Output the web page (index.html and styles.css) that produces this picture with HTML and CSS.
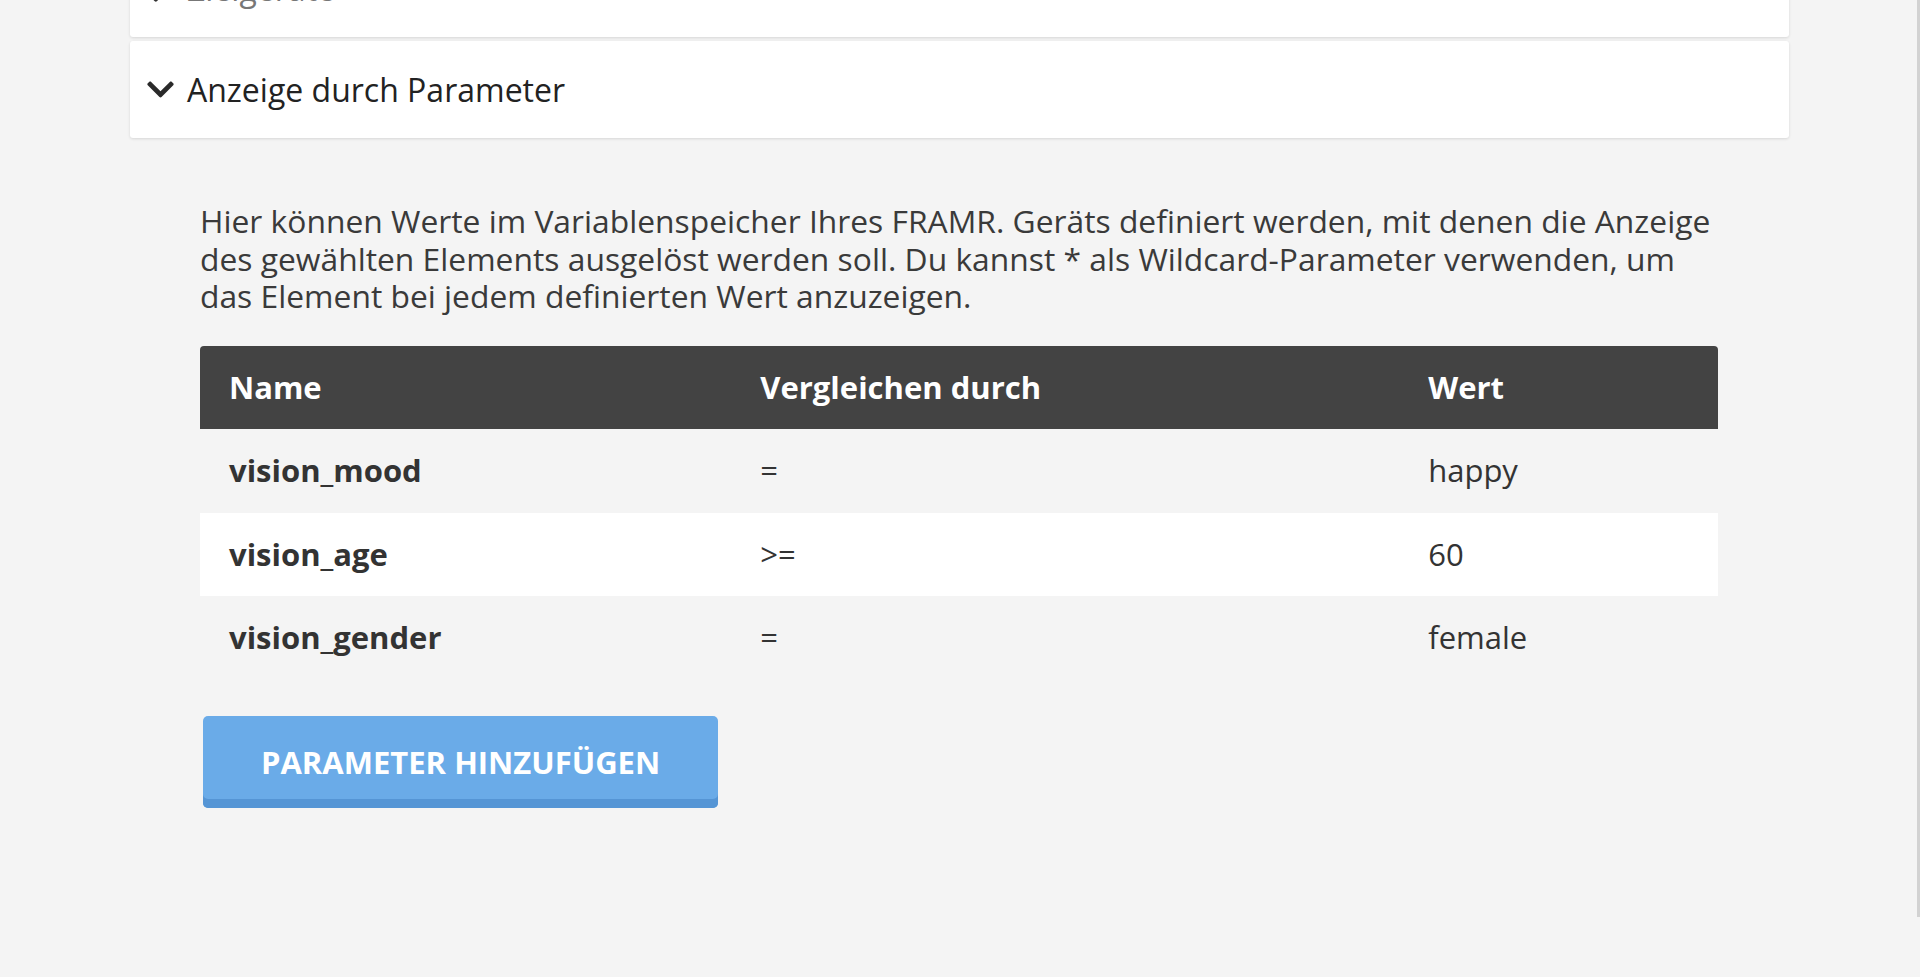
FILE: index.html
```html
<!DOCTYPE html>
<html lang="de">
<head>
    <meta charset="UTF-8">
    <meta name="viewport" content="width=device-width, initial-scale=1.0">
    <title>Anzeige durch Parameter</title>
    <link rel="stylesheet" href="styles.css">
</head>
<body>
    <div class="viewport">
        <div class="panels">
            <div class="panel panel-collapsed">
                <svg class="chevron" viewBox="0 0 320 512" aria-hidden="true">
                    <path d="M285.476 272.971L91.132 467.314c-9.373 9.373-24.569 9.373-33.941 0l-22.667-22.667c-9.357-9.357-9.375-24.522-.04-33.901L188.505 256 34.484 101.255c-9.335-9.379-9.317-24.544.04-33.901l22.667-22.667c9.373-9.373 24.569-9.373 33.941 0L285.475 239.03c9.373 9.372 9.373 24.568.001 33.941z"/>
                </svg>
                <span>Zielgeräte</span>
            </div>

            <div class="panel">
                <svg class="chevron" viewBox="0 0 448 512" aria-hidden="true">
                    <path d="M207.029 381.476L12.686 187.132c-9.373-9.373-9.373-24.569 0-33.941l22.667-22.667c9.357-9.357 24.522-9.375 33.901-.04L224 284.505l154.745-154.021c9.379-9.335 24.544-9.317 33.901.04l22.667 22.667c9.373 9.373 9.373 24.569 0 33.941L240.971 381.476c-9.373 9.372-24.569 9.372-33.942 0z"/>
                </svg>
                <span>Anzeige durch Parameter</span>
            </div>

            <div class="panel-body">
                <p class="hint">
                    Hier können Werte im Variablenspeicher Ihres FRAMR. Geräts definiert werden, mit denen die Anzeige
                    des gewählten Elements ausgelöst werden soll. Du kannst * als Wildcard-Parameter verwenden, um
                    das Element bei jedem definierten Wert anzuzeigen.
                </p>

                <table class="params">
                    <colgroup>
                        <col class="col-name">
                        <col class="col-op">
                        <col class="col-value">
                    </colgroup>
                    <thead>
                        <tr>
                            <th>Name</th>
                            <th>Vergleichen durch</th>
                            <th>Wert</th>
                        </tr>
                    </thead>
                    <tbody>
                        <tr>
                            <td class="param-name">vision_mood</td>
                            <td>=</td>
                            <td>happy</td>
                        </tr>
                        <tr>
                            <td class="param-name">vision_age</td>
                            <td>&gt;=</td>
                            <td>60</td>
                        </tr>
                        <tr>
                            <td class="param-name">vision_gender</td>
                            <td>=</td>
                            <td>female</td>
                        </tr>
                    </tbody>
                </table>

                <button class="btn-add">Parameter hinzufügen</button>
            </div>
        </div>
    </div>
</body>
</html>
```

FILE: styles.css
```css
/* Grundlayout */
body {
    margin: 0;
    background: #f4f4f4;
    font-family: "Open Sans", "Noto Sans", Arial, sans-serif;
    color: #333;
    overflow: hidden;
}

.viewport {
    min-height: 100vh;
    border-right: 3px solid #d2d2d2;
}

.panels {
    margin: -60px 128px 0 130px;
}

/* Akkordeon-Kopf */
.panel {
    display: flex;
    align-items: center;
    gap: 13px;
    height: 97px;
    box-sizing: border-box;
    padding: 0 17px;
    margin-bottom: 4px;
    background: #fff;
    border-radius: 3px;
    box-shadow: 0 1px 3px rgba(0, 0, 0, 0.12);
    font-size: 32px;
    color: #222;
}

.panel .chevron {
    width: 27px;
    height: 31px;
    fill: #2a2a2a;
    flex-shrink: 0;
}

.panel-collapsed {
    color: #777;
}

.panel-collapsed .chevron {
    width: 20px;
    fill: #333;
    margin: 0 3px 0 4px;
}

/* Inhalt */
.panel-body {
    padding: 0 71px 0 70px;
}

.hint {
    margin: 64px -8px 31px 0;
    font-size: 31.8px;
    line-height: 37.5px;
    color: #3a3a3a;
}

/* Tabelle */
.params {
    width: 100%;
    border-collapse: collapse;
    table-layout: fixed;
    font-size: 31px;
    line-height: 37.5px;
}

.col-name { width: 35%; }
.col-op { width: 44%; }
.col-value { width: 21%; }

.params th,
.params td {
    padding: 23px 29px;
    text-align: left;
}

.params thead tr {
    background: #434343;
}

.params th {
    color: #fff;
    font-weight: 700;
}

.params th:first-child { border-top-left-radius: 4px; }
.params th:last-child { border-top-right-radius: 4px; }

.params tbody tr:nth-child(even) {
    background: #fff;
}

.params td {
    color: #333;
}

.param-name {
    font-weight: 700;
}

/* Button */
.btn-add {
    margin: 36px 0 0 3px;
    height: 92px;
    padding: 0 58px;
    background: #6aabe8;
    color: #fff;
    border: none;
    border-radius: 5px;
    box-shadow: inset 0 -9px 0 #5595d5;
    font-family: inherit;
    font-size: 31px;
    font-weight: 700;
    text-transform: uppercase;
    cursor: pointer;
}
```
